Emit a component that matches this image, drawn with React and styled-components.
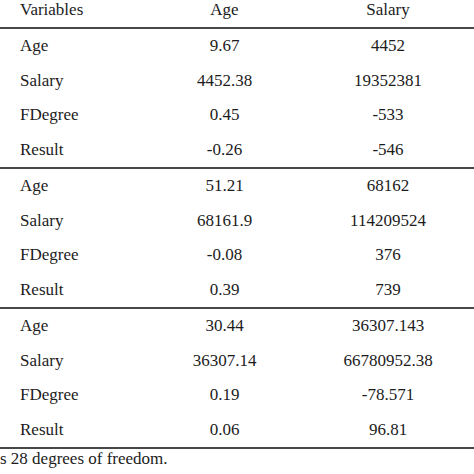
import styled, { createGlobalStyle } from "styled-components";

const GlobalStyle = createGlobalStyle`
	html, body {
		margin: 0;
		padding: 0;
		background: #ffffff;
	}
`;

const Page = styled.div`
	width: 474px;
	height: 474px;
	overflow: hidden;
	background: #ffffff;
	color: #1c1c1c;
	font-family: serif;
`;

const Table = styled.div`
	margin-top: -7.5px;
	font-size: 17px;
`;

const Group = styled.div`
	border-top: 2px solid #484848;
	border-bottom: ${(props) => (props.$last ? "2px solid #484848" : "none")};
`;

const Row = styled.div`
	display: grid;
	grid-template-columns: 150px 149px 1fr;
	height: 34.5px;
	line-height: 34.5px;
	white-space: nowrap;
`;

const LabelCell = styled.div`
	padding-left: 20px;
`;

const ValueCell = styled.div`
	text-align: center;
	padding-left: ${(props) => (props.$shift ? "3px" : "0")};
`;

const Note = styled.p`
	margin: 0;
	font-size: 17px;
	line-height: normal;
	white-space: nowrap;
`;

const groups = [
	[
		["Age", "9.67", "4452"],
		["Salary", "4452.38", "19352381"],
		["FDegree", "0.45", "-533"],
		["Result", "-0.26", "-546"],
	],
	[
		["Age", "51.21", "68162"],
		["Salary", "68161.9", "114209524"],
		["FDegree", "-0.08", "376"],
		["Result", "0.39", "739"],
	],
	[
		["Age", "30.44", "36307.143"],
		["Salary", "36307.14", "66780952.38"],
		["FDegree", "0.19", "-78.571"],
		["Result", "0.06", "96.81"],
	],
];

function App() {
	return (
		<Page>
			<GlobalStyle />
			<Table>
				<Row>
					<LabelCell>Variables</LabelCell>
					<ValueCell>Age</ValueCell>
					<ValueCell $shift>Salary</ValueCell>
				</Row>

				{groups.map((group, gi) => (
					<Group key={gi} $last={gi === groups.length - 1}>
						{group.map(([label, age, salary]) => (
							<Row key={label}>
								<LabelCell>{label}</LabelCell>
								<ValueCell>{age}</ValueCell>
								<ValueCell $shift>{salary}</ValueCell>
							</Row>
						))}
					</Group>
				))}
			</Table>
			<Note>s 28 degrees of freedom.</Note>
		</Page>
	);
}

export default App;
